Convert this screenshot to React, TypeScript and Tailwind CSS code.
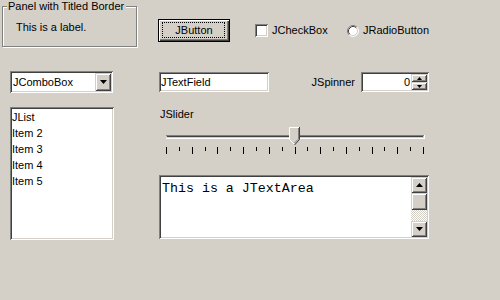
import React from "react";

const sunken =
  "shadow-[inset_1px_1px_0_#808080,inset_-1px_-1px_0_#ffffff,inset_2px_2px_0_#404040,inset_-2px_-2px_0_#d4d0c8]";
const raised =
  "shadow-[inset_1px_1px_0_#d4d0c8,inset_-1px_-1px_0_#404040,inset_2px_2px_0_#ffffff,inset_-2px_-2px_0_#808080]";

function Tri({ up = false, w = 7, h = 4 }: { up?: boolean; w?: number; h?: number }) {
  return (
    <svg width={w} height={h} viewBox={`0 0 ${w} ${h}`} className="block">
      {up ? (
        <polygon points={`0,${h} ${w},${h} ${w / 2},0`} fill="#000" />
      ) : (
        <polygon points={`0,0 ${w},0 ${w / 2},${h}`} fill="#000" />
      )}
    </svg>
  );
}

function Radio() {
  return (
    <svg width={12} height={12} viewBox="0 0 12 12" className="block">
      <circle cx={6} cy={6} r={5} fill="#fff" />
      <path d="M2.11 9.89 A5.5 5.5 0 0 1 9.89 2.11" stroke="#808080" fill="none" />
      <path d="M2.82 9.18 A4.5 4.5 0 0 1 9.18 2.82" stroke="#404040" fill="none" />
      <path d="M9.89 2.11 A5.5 5.5 0 0 1 2.11 9.89" stroke="#ffffff" fill="none" />
      <path d="M9.18 2.82 A4.5 4.5 0 0 1 2.82 9.18" stroke="#d4d0c8" fill="none" />
    </svg>
  );
}

function Slider() {
  const ticks = Array.from({ length: 21 }, (_, i) => i);
  return (
    <svg width={270} height={54} viewBox="0 0 270 54" className="block">
      <rect x={7} y={14} width={258} height={1} fill="#808080" />
      <rect x={8} y={15} width={256} height={1} fill="#404040" />
      <rect x={7} y={17} width={259} height={1} fill="#ffffff" />
      <rect x={265} y={14} width={1} height={4} fill="#ffffff" />
      {ticks.map((i) => {
        const x = Math.round(7 + i * 12.85);
        const major = i % 2 === 0;
        return <rect key={i} x={x} y={26} width={1} height={major ? 7 : 4} fill="#000" />;
      })}
      <polygon points="130,6 141,6 141,18 135.5,24.5 130,18" fill="#d4d0c8" />
      <path d="M130.5 18.5 V6.5 H140" stroke="#ffffff" fill="none" />
      <path d="M130.5 18.5 L135.5 23.5" stroke="#ffffff" fill="none" />
      <path d="M140.5 6 V18.5 L135.5 24" stroke="#404040" fill="none" />
      <path d="M139.5 7 V18 L135.5 22" stroke="#808080" fill="none" />
    </svg>
  );
}

export default function App() {
  return (
    <div className="w-[500px] h-[300px] bg-[#d4d0c8] text-black text-[11px] leading-[13px] font-['Liberation_Sans',Arial,sans-serif] overflow-hidden">
      {/* Row 1 */}
      <div className="flex items-start h-[47px]">
        <div className="relative ml-[2px] mt-[6px] w-[135px] h-[41px] border border-[#808080] shadow-[inset_1px_1px_0_#ffffff,1px_1px_0_#ffffff]">
          <span className="absolute left-[4px] top-[-8px] pl-[1px] pr-[2px] bg-[#d4d0c8] leading-[14px] whitespace-nowrap">
            Panel with Titled Border
          </span>
          <div className="ml-[13px] mt-[13px] leading-[14px]">This is a label.</div>
        </div>
        <div className="relative ml-[21px] mt-[19px] w-[72px] h-[23px] border border-black shadow-[inset_1px_1px_0_#ffffff,inset_-1px_-1px_0_#404040,inset_-2px_-2px_0_#808080] flex items-center justify-center">
          <div className="absolute left-[3px] right-[4px] top-[2px] bottom-[3px] border border-dotted border-black" />
          <span className="relative">JButton</span>
        </div>
        <div className="ml-[25px] mt-[24px] w-[92px] flex items-center">
          <div className={`w-[13px] h-[13px] bg-white ${sunken}`} />
          <span className="ml-[4px]">JCheckBox</span>
        </div>
        <div className="mt-[24px] flex items-center">
          <Radio />
          <span className="ml-[4px]">JRadioButton</span>
        </div>
      </div>

      {/* Row 2 */}
      <div className="flex items-start mt-[24px] h-[22px]">
        <div className={`ml-[10px] w-[103px] h-[22px] bg-white ${sunken} flex items-center pl-[2px] pr-[2px]`}>
          <span className="flex-1 pl-[1px]">JComboBox</span>
          <div className={`w-[16px] h-[18px] bg-[#d4d0c8] ${raised} flex items-center justify-center`}>
            <Tri w={7} h={4} />
          </div>
        </div>
        <div className={`ml-[46px] mt-[1px] w-[110px] h-[20px] bg-white ${sunken} flex items-center pl-[2px]`}>
          JTextField
        </div>
        <div className="ml-[40px] mt-[1px] h-[20px] w-[52px] flex items-center justify-end pr-[6px] whitespace-nowrap">
          JSpinner
        </div>
        <div className={`mt-[1px] w-[68px] h-[20px] bg-white ${sunken} flex items-center p-[2px]`}>
          <span className="flex-1 text-right pr-[1px]">0</span>
          <div className="flex flex-col w-[16px] h-[16px]">
            <div className={`h-[8px] bg-[#d4d0c8] ${raised} flex items-center justify-center`}>
              <Tri up w={5} h={3} />
            </div>
            <div className={`h-[8px] bg-[#d4d0c8] ${raised} flex items-center justify-center`}>
              <Tri w={5} h={3} />
            </div>
          </div>
        </div>
      </div>

      {/* Row 3 */}
      <div className="flex items-start mt-[14px]">
        <div className={`ml-[10px] w-[104px] h-[133px] bg-white ${sunken} pt-[2px] pl-[2px]`}>
          {["JList", "Item 2", "Item 3", "Item 4", "Item 5"].map((t) => (
            <div key={t} className="h-[16px] leading-[16px]">
              {t}
            </div>
          ))}
        </div>
        <div className="ml-[45px] w-[270px] flex flex-col">
          <div className="h-[14px] leading-[14px] pl-[1px]">JSlider</div>
          <Slider />
          <div className={`w-[270px] h-[64px] bg-white ${sunken} flex p-[2px]`}>
            <div className="flex-1 pl-[1px] pt-[4px] font-['Liberation_Mono',monospace] text-[13.3px] leading-[15px] whitespace-nowrap">
              This is a JTextArea
            </div>
            <div className="w-[16px] flex flex-col">
              <div className={`h-[16px] bg-[#d4d0c8] ${raised} flex items-center justify-center`}>
                <Tri up />
              </div>
              <div className={`h-[17px] bg-[#d4d0c8] ${raised}`} />
              <div className="flex-1 bg-[repeating-conic-gradient(#d4d0c8_0_25%,#ffffff_0_50%)] bg-[length:2px_2px]" />
              <div className={`h-[16px] bg-[#d4d0c8] ${raised} flex items-center justify-center`}>
                <Tri />
              </div>
            </div>
          </div>
        </div>
      </div>
    </div>
  );
}
